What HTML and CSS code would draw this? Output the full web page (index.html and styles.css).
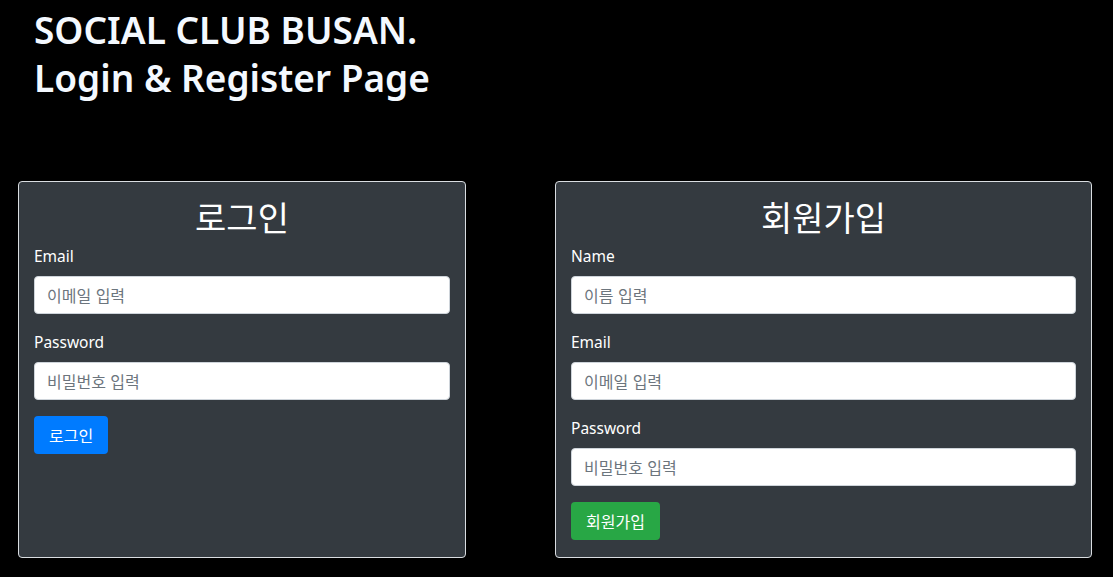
FILE: index.html
```html
<!DOCTYPE html>
<html lang="ko">
<head>
<meta charset="utf-8">
<title>SOCIAL CLUB BUSAN</title>
<link rel="stylesheet" href="styles.css">
</head>
<body>
<header class="hero">
  <h1 class="hero-title">SOCIAL CLUB BUSAN.<br>Login &amp; Register Page</h1>
</header>
<main class="cards">
  <section class="card">
    <h2 class="card-title">로그인</h2>
    <div class="form-group">
      <label class="form-label">Email</label>
      <input class="form-control" type="email" placeholder="이메일 입력">
    </div>
    <div class="form-group">
      <label class="form-label">Password</label>
      <input class="form-control" type="password" placeholder="비밀번호 입력">
    </div>
    <button class="btn btn-primary">로그인</button>
  </section>
  <section class="card">
    <h2 class="card-title">회원가입</h2>
    <div class="form-group">
      <label class="form-label">Name</label>
      <input class="form-control" type="text" placeholder="이름 입력">
    </div>
    <div class="form-group">
      <label class="form-label">Email</label>
      <input class="form-control" type="email" placeholder="이메일 입력">
    </div>
    <div class="form-group">
      <label class="form-label">Password</label>
      <input class="form-control" type="password" placeholder="비밀번호 입력">
    </div>
    <button class="btn btn-success">회원가입</button>
  </section>
</main>
</body>
</html>
```
FILE: styles.css
```css
* { box-sizing: border-box; }
html, body {
  margin: 0;
  background: #000;
  color: #fff;
  font-family: "Noto Sans", "Noto Sans CJK KR", sans-serif;
  font-size: 15px;
  line-height: 1.5;
}
.hero {
  padding: 6px 0 0 34px;
  height: 181px;
}
.hero-title {
  margin: 0;
  font-size: 37px;
  font-weight: 600;
  line-height: 48px;
  color: #f4f9ff;
  letter-spacing: 0;
}
.cards {
  display: grid;
  grid-template-columns: 448px 537px;
  column-gap: 89px;
  padding-left: 18px;
}
.card {
  background: #343a40;
  border: 1px solid #d9dde1;
  border-radius: 4px;
  padding: 16px 15px 17px;
  display: flex;
  flex-direction: column;
  align-items: flex-start;
}
.card-title {
  align-self: stretch;
  text-align: center;
  margin: 0 0 8px;
  font-family: "Noto Sans CJK KR", sans-serif;
  font-size: 34px;
  font-weight: 400;
  line-height: 38px;
}
.form-group {
  align-self: stretch;
  margin-bottom: 16px;
}
.form-label {
  display: block;
  margin-bottom: 8px;
  line-height: 24px;
  font-size: 15.5px;
}
.form-control {
  display: block;
  width: 100%;
  height: 38px;
  padding: 6px 12px;
  border: 1px solid #ced4da;
  border-radius: 4px;
  background: #fff;
  font-family: "Noto Sans CJK KR", sans-serif;
  font-size: 16px;
}
.form-control::placeholder {
  color: #6c757d;
}
.btn {
  height: 38px;
  padding: 0 14px;
  border: 1px solid transparent;
  border-radius: 4px;
  color: #fff;
  font-family: "Noto Sans CJK KR", sans-serif;
  font-size: 16px;
  line-height: 36px;
}
.btn-primary { background: #007bff; }
.btn-success { background: #28a745; }
```
